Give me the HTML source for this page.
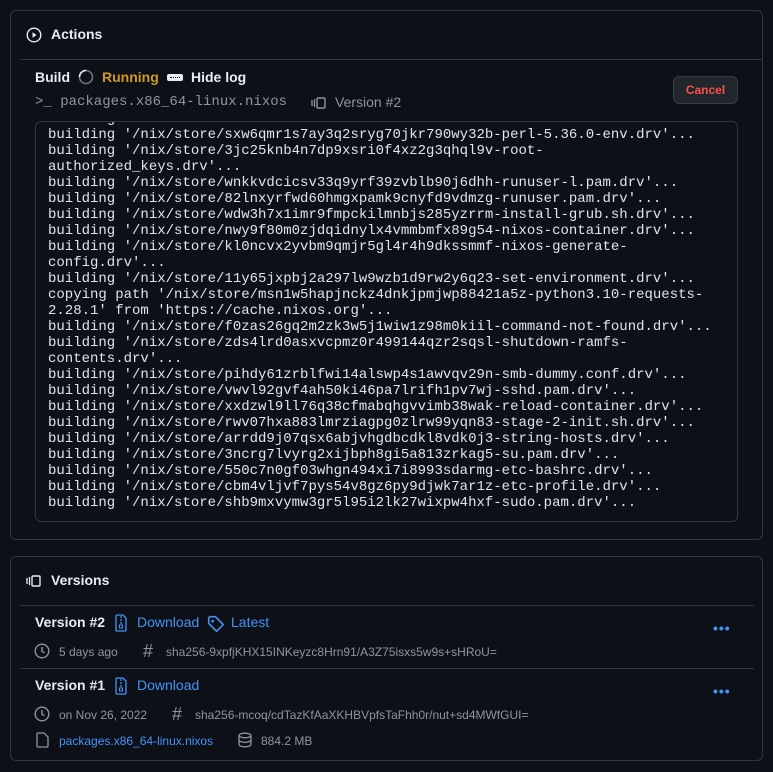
<!DOCTYPE html>
<html><head><style>
*{box-sizing:border-box;margin:0;padding:0}
body{width:773px;height:772px;background:#0d1117;font-family:"Liberation Sans",sans-serif;color:#e6edf3;position:relative;overflow:hidden}
.card{position:absolute;left:10px;width:753px;border:1px solid #30363d;border-radius:6px}
.abs{position:absolute;white-space:nowrap}
.b{font-weight:bold}
.hr{position:absolute;height:1px;background:#30363d}
.log{position:absolute;left:35px;top:121px;width:703px;height:401px;border:1px solid #30363d;border-radius:6px;overflow:hidden}
.log pre{position:absolute;left:12px;top:-11px;font-family:"Liberation Mono",monospace;font-size:14px;line-height:16px;color:#dfe5ea}
.link{color:#4493f8}
.muted{color:#8d96a0}
.dots{position:absolute;color:#4493f8;font-size:14px;letter-spacing:1px;font-weight:bold}
</style></head><body>
<div class="card" style="top:10px;height:530px"></div>
<svg class="abs" style="left:26px;top:27px" width="16" height="16" viewBox="0 0 16 16"><circle cx="8" cy="8" r="6.8" fill="none" stroke="#e6edf3" stroke-width="1.4"/><path d="M6.5 5.3v5.4L10.6 8z" fill="#e6edf3"/></svg>
<div class="abs b" style="left:51px;top:26px;font-size:14px">Actions</div>
<div class="hr" style="left:20px;top:59px;width:743px"></div>
<div class="abs b" style="left:35px;top:69px;font-size:14px">Build</div>
<svg class="abs" style="left:78px;top:69px" width="16" height="16" viewBox="0 0 16 16"><circle cx="8" cy="8" r="6.5" fill="none" stroke="#6e7681" stroke-width="1.6"/><path d="M1.5 8A6.5 6.5 0 0 1 8 1.5" fill="none" stroke="#e6edf3" stroke-width="1.6"/></svg>
<div class="abs b" style="left:102px;top:69px;font-size:14px;color:#d29922">Running</div>
<div class="abs" style="left:167px;top:74px;width:16px;height:7px;background:#e6edf3;border-radius:2px"></div>
<div class="abs" style="left:170px;top:77px;width:10px;height:1px;border-top:1px dotted #0d1117"></div>
<div class="abs b" style="left:191px;top:69px;font-size:14px">Hide log</div>
<div class="abs" style="left:35px;top:94px;font-size:14px;color:#8d96a0;font-family:'Liberation Mono',monospace">&gt;_ packages.x86_64-linux.nixos</div>
<svg class="abs" style="left:311px;top:95px" width="16" height="16" viewBox="0 0 16 16"><path d="M1 5v6M3.5 4v8" stroke="#8d96a0" stroke-width="1.3"/><rect x="6" y="3" width="8" height="10" rx="1" fill="none" stroke="#8d96a0" stroke-width="1.4"/></svg>
<div class="abs" style="left:335px;top:94px;font-size:14px;color:#8d96a0">Version #2</div>
<div class="abs" style="left:673px;top:76px;width:65px;height:28px;background:#21262d;border:1px solid #363b42;border-radius:6px;color:#f85149;font-size:12px;font-weight:bold;text-align:center;line-height:26px">Cancel</div>
<div class="log"><pre>building '/nix/store/xxxxxxxxxxxxxxxxxxxxxxxxxxxxxxxx-...'
building '/nix/store/sxw6qmr1s7ay3q2sryg70jkr790wy32b-perl-5.36.0-env.drv'...
building '/nix/store/3jc25knb4n7dp9xsri0f4xz2g3qhql9v-root-
authorized_keys.drv'...
building '/nix/store/wnkkvdcicsv33q9yrf39zvblb90j6dhh-runuser-l.pam.drv'...
building '/nix/store/82lnxyrfwd60hmgxpamk9cnyfd9vdmzg-runuser.pam.drv'...
building '/nix/store/wdw3h7x1imr9fmpckilmnbjs285yzrrm-install-grub.sh.drv'...
building '/nix/store/nwy9f80m0zjdqidnylx4vmmbmfx89g54-nixos-container.drv'...
building '/nix/store/kl0ncvx2yvbm9qmjr5gl4r4h9dkssmmf-nixos-generate-
config.drv'...
building '/nix/store/11y65jxpbj2a297lw9wzb1d9rw2y6q23-set-environment.drv'...
copying path '/nix/store/msn1w5hapjnckz4dnkjpmjwp88421a5z-python3.10-requests-
2.28.1' from 'https://cache.nixos.org'...
building '/nix/store/f0zas26gq2m2zk3w5j1wiw1z98m0kiil-command-not-found.drv'...
building '/nix/store/zds4lrd0asxvcpmz0r499144qzr2sqsl-shutdown-ramfs-
contents.drv'...
building '/nix/store/pihdy61zrblfwi14alswp4s1awvqv29n-smb-dummy.conf.drv'...
building '/nix/store/vwvl92gvf4ah50ki46pa7lrifh1pv7wj-sshd.pam.drv'...
building '/nix/store/xxdzwl9ll76q38cfmabqhgvvimb38wak-reload-container.drv'...
building '/nix/store/rwv07hxa883lmrziagpg0zlrw99yqn83-stage-2-init.sh.drv'...
building '/nix/store/arrdd9j07qsx6abjvhgdbcdkl8vdk0j3-string-hosts.drv'...
building '/nix/store/3ncrg7lvyrg2xijbph8gi5a813zrkag5-su.pam.drv'...
building '/nix/store/550c7n0gf03whgn494xi7i8993sdarmg-etc-bashrc.drv'...
building '/nix/store/cbm4vljvf7pys54v8gz6py9djwk7ar1z-etc-profile.drv'...
building '/nix/store/shb9mxvymw3gr5l95i2lk27wixpw4hxf-sudo.pam.drv'...</pre></div>

<div class="card" style="top:556px;height:205px"></div>
<svg class="abs" style="left:26px;top:573px" width="16" height="16" viewBox="0 0 16 16"><path d="M1 5v6M3.5 4v8" stroke="#e6edf3" stroke-width="1.3"/><rect x="6" y="3" width="8" height="10" rx="1" fill="none" stroke="#e6edf3" stroke-width="1.4"/></svg>
<div class="abs b" style="left:51px;top:572px;font-size:14px">Versions</div>
<div class="hr" style="left:20px;top:605px;width:734px"></div>
<div class="abs b" style="left:35px;top:614px;font-size:14px">Version #2</div>
<svg class="abs" style="left:114px;top:614px" width="14" height="18" viewBox="0 0 14 18"><path d="M3 1h6l3 3v12a1 1 0 0 1-1 1H3a1 1 0 0 1-1-1V2a1 1 0 0 1 1-1z" fill="none" stroke="#4493f8" stroke-width="1.3"/><path d="M6 3h2M6 6h2M6 9h2" stroke="#4493f8" stroke-width="1.3"/><rect x="5.5" y="11" width="3" height="3" fill="none" stroke="#4493f8"/></svg>
<div class="abs link" style="left:137px;top:614px;font-size:14px">Download</div>
<svg class="abs" style="left:207px;top:615px" width="18" height="18" viewBox="0 0 16 16"><path d="M1.5 2.5v5l7 7 6-6-7-7h-5z" fill="none" stroke="#4493f8" stroke-width="1.4" stroke-linejoin="round"/><circle cx="5" cy="5.5" r="1.2" fill="#4493f8"/></svg>
<div class="abs link" style="left:231px;top:614px;font-size:14px">Latest</div>
<div class="dots" style="left:713px;top:620px">•••</div>
<svg class="abs" style="left:34px;top:643px" width="16" height="16" viewBox="0 0 16 16"><circle cx="8" cy="8" r="6.8" fill="none" stroke="#8d96a0" stroke-width="1.4"/><path d="M8 4v4.3l2.5 1.5" fill="none" stroke="#8d96a0" stroke-width="1.4"/></svg>
<div class="abs muted" style="left:59px;top:645px;font-size:12px">5 days ago</div>
<div class="abs muted" style="left:143px;top:641px;font-size:18px">#</div>
<div class="abs muted" style="left:166px;top:645px;font-size:12px">sha256-9xpfjKHX15INKeyzc8Hrn91/A3Z75isxs5w9s+sHRoU=</div>
<div class="hr" style="left:20px;top:668px;width:734px"></div>
<div class="abs b" style="left:35px;top:677px;font-size:14px">Version #1</div>
<svg class="abs" style="left:114px;top:677px" width="14" height="18" viewBox="0 0 14 18"><path d="M3 1h6l3 3v12a1 1 0 0 1-1 1H3a1 1 0 0 1-1-1V2a1 1 0 0 1 1-1z" fill="none" stroke="#4493f8" stroke-width="1.3"/><path d="M6 3h2M6 6h2M6 9h2" stroke="#4493f8" stroke-width="1.3"/><rect x="5.5" y="11" width="3" height="3" fill="none" stroke="#4493f8"/></svg>
<div class="abs link" style="left:137px;top:677px;font-size:14px">Download</div>
<div class="dots" style="left:713px;top:683px">•••</div>
<svg class="abs" style="left:34px;top:706px" width="16" height="16" viewBox="0 0 16 16"><circle cx="8" cy="8" r="6.8" fill="none" stroke="#8d96a0" stroke-width="1.4"/><path d="M8 4v4.3l2.5 1.5" fill="none" stroke="#8d96a0" stroke-width="1.4"/></svg>
<div class="abs muted" style="left:59px;top:708px;font-size:12px">on Nov 26, 2022</div>
<div class="abs muted" style="left:172px;top:704px;font-size:18px">#</div>
<div class="abs muted" style="left:195px;top:708px;font-size:12px">sha256-mcoq/cdTazKfAaXKHBVpfsTaFhh0r/nut+sd4MWfGUI=</div>
<svg class="abs" style="left:35px;top:732px" width="16" height="16" viewBox="0 0 16 16"><path d="M3 1h6l4 4v9a1 1 0 0 1-1 1H3a1 1 0 0 1-1-1V2a1 1 0 0 1 1-1z" fill="none" stroke="#8d96a0" stroke-width="1.3"/></svg>
<div class="abs link" style="left:59px;top:734px;font-size:12px">packages.x86_64-linux.nixos</div>
<svg class="abs" style="left:237px;top:732px" width="16" height="16" viewBox="0 0 16 16"><ellipse cx="8" cy="3.5" rx="6" ry="2.3" fill="none" stroke="#8d96a0" stroke-width="1.3"/><path d="M2 3.5v9c0 1.3 2.7 2.3 6 2.3s6-1 6-2.3v-9M2 8c0 1.3 2.7 2.3 6 2.3s6-1 6-2.3" fill="none" stroke="#8d96a0" stroke-width="1.3"/></svg>
<div class="abs muted" style="left:261px;top:734px;font-size:12px">884.2 MB</div>
</body></html>
